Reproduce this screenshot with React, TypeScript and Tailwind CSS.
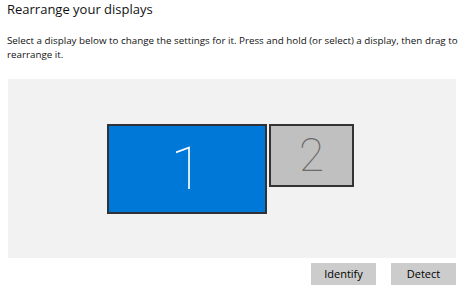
export default function App() {
  return (
    <div className="w-[474px] h-[294px] bg-white overflow-hidden" style={{ fontFamily: '"Open Sans", "Noto Sans", sans-serif' }}>
      <h1 className="pl-[7px] pt-[1px] text-[13px] leading-[17px] font-normal text-[#111]">Rearrange your displays</h1>
      <p className="pl-[7px] w-[468px] mt-[16px] text-[9.8px] leading-[14px] text-[#111]">
        Select a display below to change the settings for it. Press and hold (or select) a display, then drag to rearrange it.
      </p>
      <div className="ml-[8px] mt-[17px] w-[448px] h-[179px] bg-[#f2f2f2] flex items-center justify-center">
        <div className="flex items-start gap-[2px] -ml-[3px]">
          <div className="w-[160px] h-[90px] bg-[#0078d7] border-2 border-[#2f3338] flex items-center justify-center">
            <span className="text-[60px] leading-none font-thin text-white" style={{ fontFamily: 'Roboto, sans-serif' }}>1</span>
          </div>
          <div className="w-[85px] h-[63px] bg-[#c0c0c0] border-2 border-[#333] flex items-center justify-center">
            <span className="text-[46px] leading-none font-thin text-[#6b6b6b]" style={{ fontFamily: 'Roboto, sans-serif' }}>2</span>
          </div>
        </div>
      </div>
      <div className="w-[456px] flex justify-end gap-[15px] mt-[5px]">
        <button className="w-[65px] h-[22px] bg-[#cccccc] text-[11px] text-black">Identify</button>
        <button className="w-[65px] h-[22px] bg-[#cccccc] text-[11px] text-black">Detect</button>
      </div>
    </div>
  );
}
